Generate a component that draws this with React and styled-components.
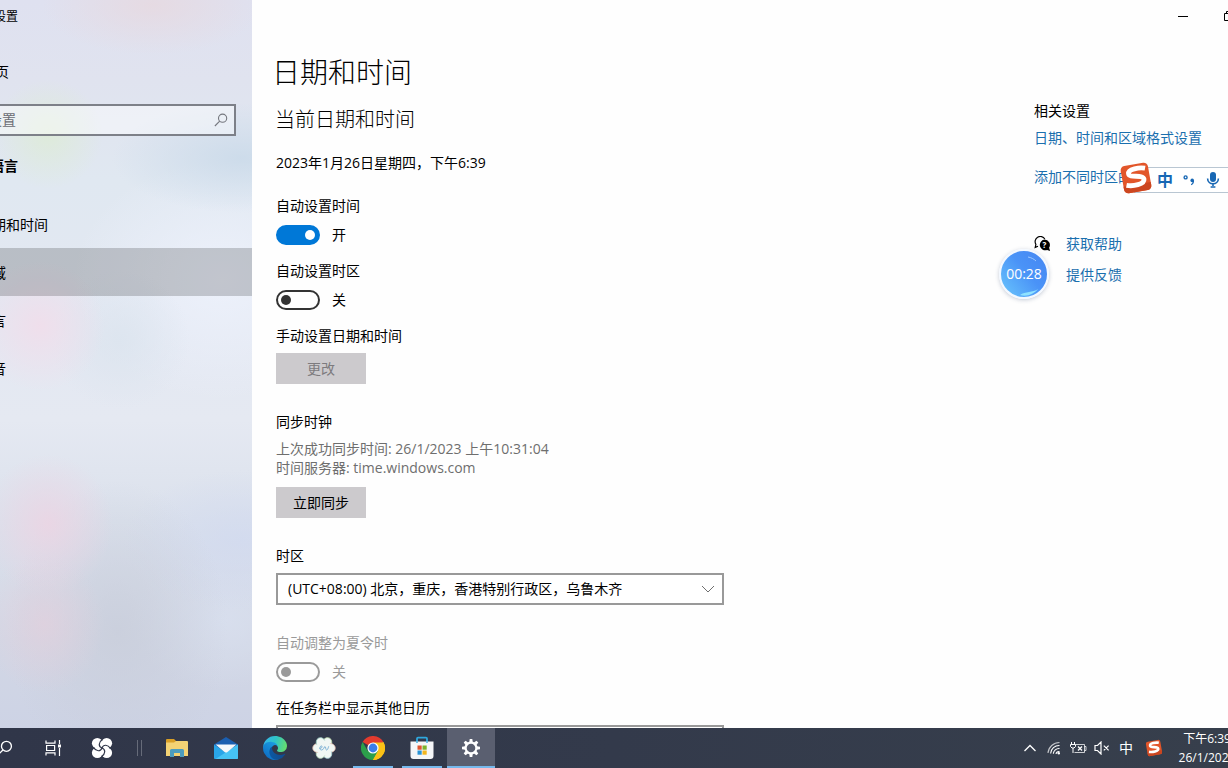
import React, { useState } from 'react';
import styled, { createGlobalStyle } from 'styled-components';

const accent = '#0078d7';
const linkColor = '#1a6fae';
const mutedText = '#6e6e6e';
const disabledText = '#9a9a9a';
const buttonGray = '#cccacd';

const GlobalStyle = createGlobalStyle`
  * {
    box-sizing: border-box;
  }
  body {
    margin: 0;
    overflow: hidden;
    color: #000;
    font-family: "Open Sans", "Noto Sans CJK SC", sans-serif;
    font-size: 14px;
    line-height: 20px;
  }
  button, input, select {
    font: inherit;
    color: inherit;
  }
`;

const Desktop = styled.div`
  position: relative;
  display: flex;
  flex-direction: column;
  height: 100vh;
  overflow: hidden;
`;

const SettingsWindow = styled.div`
  display: flex;
  flex: 1;
  min-height: 0;
  background: #fefefe;
`;

/* ---------- sidebar ---------- */

/* the window hangs over the left edge of the desktop */
const Sidebar = styled.aside`
  flex: none;
  width: 320px;
  margin-left: -68px;
  overflow: hidden;
  background:
    radial-gradient(ellipse 110px 50px at 220px 5px, rgba(232, 216, 222, 0.75), rgba(232, 216, 222, 0)),
    radial-gradient(ellipse 55px 55px at 116px 134px, rgba(221, 236, 212, 0.8), rgba(221, 236, 212, 0)),
    radial-gradient(ellipse 130px 55px at 310px 158px, rgba(204, 219, 234, 0.95), rgba(204, 219, 234, 0)),
    radial-gradient(ellipse 65px 65px at 108px 326px, rgba(240, 222, 235, 0.95), rgba(240, 222, 235, 0)),
    radial-gradient(ellipse 70px 70px at 188px 340px, rgba(219, 228, 238, 0.8), rgba(219, 228, 238, 0)),
    radial-gradient(ellipse 65px 70px at 116px 524px, rgba(236, 212, 227, 0.85), rgba(236, 212, 227, 0)),
    radial-gradient(ellipse 60px 70px at 112px 624px, rgba(226, 208, 221, 0.75), rgba(226, 208, 221, 0)),
    radial-gradient(ellipse 110px 150px at 186px 630px, rgba(200, 205, 218, 0.75), rgba(200, 205, 218, 0)),
    radial-gradient(ellipse 120px 70px at 310px 540px, rgba(208, 217, 240, 0.7), rgba(208, 217, 240, 0)),
    radial-gradient(ellipse 90px 70px at 290px 620px, rgba(216, 223, 238, 0.9), rgba(216, 223, 238, 0)),
    radial-gradient(ellipse 150px 120px at 290px 280px, rgba(238, 242, 252, 0.9), rgba(238, 242, 252, 0)),
    linear-gradient(#dfe1f0 0, #e0e3ef 80px, #e0e8f1 180px, #e3e8f2 330px, #e5e9f2 420px, #dbe1ec 520px, #d2d7e5 640px, #cdd3e5 728px);
`;

const AppName = styled.div`
  padding: 7px 0 0 62px;
  font-size: 12px;
`;

const HomeLink = styled.a`
  display: block;
  margin-top: 35px;
  padding-left: 49px;
  color: inherit;
  text-decoration: none;
`;

const SearchBox = styled.label`
  display: flex;
  align-items: center;
  height: 32px;
  margin: 22px 16px 0;
  padding: 0 6px 0 10px;
  border: 2px solid #7d8088;
  background: rgba(255, 255, 255, 0.45);

  input {
    flex: 1;
    min-width: 0;
    padding: 0;
    border: 0;
    outline: 0;
    background: none;
  }
  input::placeholder {
    color: #6b6d74;
    opacity: 1;
  }
`;

const SidebarHeading = styled.h2`
  margin: 20px 0 24px;
  padding-left: 16px;
  font-size: 14px;
  font-weight: 700;
`;

const NavItem = styled.a`
  display: flex;
  align-items: center;
  height: 48px;
  padding: 2px 0 0 46px;
  color: inherit;
  text-decoration: none;
  background: ${props => (props.$hovered ? 'rgba(0, 0, 0, 0.18)' : 'none')};
`;

/* ---------- main pane ---------- */

const Main = styled.main`
  display: flex;
  flex: 1;
  flex-direction: column;
  min-width: 0;
  overflow: hidden;
`;

const TitleBar = styled.div`
  display: flex;
  flex: none;
  justify-content: flex-end;
  height: 32px;
  margin-right: -24px;
`;

const CaptionButton = styled.button`
  display: grid;
  place-items: center;
  width: 46px;
  padding: 0;
  border: 0;
  background: none;
`;

const Columns = styled.div`
  display: flex;
  flex: 1;
  justify-content: space-between;
  min-height: 0;
`;

const Content = styled.div`
  flex: 0 1 472px;
  padding: 20px 0 0 24px;
`;

const PageTitle = styled.h1`
  margin: 0 0 14px -4px;
  font-size: 28px;
  font-weight: 300;
  line-height: 40px;
`;

const SectionTitle = styled.h2`
  margin: 0 0 0 -1px;
  font-size: 20px;
  font-weight: 300;
  line-height: 28px;
`;

const CurrentDate = styled.p`
  margin: 19px 0 23px;
`;

const FieldLabel = styled.label`
  display: block;
  margin-bottom: ${props => (props.$tight ? '7px' : '9px')};
  color: ${props => (props.$disabled ? disabledText : 'inherit')};
`;

const ToggleRow = styled.div`
  display: flex;
  align-items: center;
  gap: 12px;
  height: 20px;
  margin-bottom: 16px;
  color: ${props => (props.$disabled ? disabledText : 'inherit')};
`;

const Switch = styled.input`
  display: flex;
  align-items: center;
  width: 44px;
  height: 20px;
  margin: 0;
  padding: 0 3px;
  border: 2px solid #333;
  border-radius: 10px;
  appearance: none;

  &::before {
    width: 10px;
    height: 10px;
    border-radius: 50%;
    background: #333;
    content: "";
  }
  &:checked {
    justify-content: flex-end;
    border-color: ${accent};
    background: ${accent};
  }
  &:checked::before {
    background: #fff;
  }
  &:disabled {
    border-color: ${disabledText};
  }
  &:disabled::before {
    background: ${disabledText};
  }
`;

const PushButton = styled.button`
  display: block;
  width: 90px;
  height: 31px;
  margin-bottom: 28px;
  padding: 0;
  border: 0;
  background: ${buttonGray};

  &:disabled {
    color: #7d7b7e;
  }
`;

const SyncTitle = styled.h3`
  margin: 0 0 7px;
  font-size: 14px;
  font-weight: 400;
`;

const SyncInfo = styled.p`
  margin: 0 0 10px;
  color: ${mutedText};
  line-height: 19px;
`;

const SelectBox = styled.div`
  display: grid;
  align-items: center;
  margin-bottom: 28px;

  select, svg {
    grid-area: 1 / 1;
  }
  select {
    width: 100%;
    height: 32px;
    padding: 0 32px 0 10px;
    border: 2px solid #999;
    border-radius: 0;
    background: #fff;
    appearance: none;
  }
  svg {
    justify-self: end;
    margin-right: 9px;
    pointer-events: none;
  }
`;

const Related = styled.aside`
  flex: none;
  width: 194px;
  padding-top: 69px;
`;

const RelatedTitle = styled.h2`
  margin: 0 0 7px;
  font-size: 14px;
  font-weight: 400;
`;

const TextLink = styled.a`
  display: block;
  color: ${linkColor};
  white-space: nowrap;
  text-decoration: none;
`;

const RelatedLinks = styled.nav`
  display: grid;
  gap: 19px;
  margin-bottom: 47px;
`;

const HelpLinks = styled.nav`
  display: grid;
  grid-template-columns: 16px auto;
  gap: 11px 16px;
  align-items: center;

  a {
    grid-column: 2;
  }
`;

/* ---------- floating widgets ---------- */

const InputBar = styled.div`
  position: absolute;
  top: 167px;
  right: 0;
  display: flex;
  align-items: center;
  width: 94px;
  height: 26px;
  padding-left: 19px;
  border: solid #b9c6d2;
  border-width: 1px 0;
  background: #fff;
  color: #1767b4;
`;

const InputBadge = styled.button`
  position: absolute;
  top: -7px;
  left: -15px;
  padding: 0;
  border: 0;
  background: none;

  svg {
    display: block;
  }
`;

const InputKey = styled.button`
  display: grid;
  flex: none;
  place-items: center;
  width: 24px;
  height: 24px;
  padding: 0;
  border: 0;
  background: none;
  font-size: 16px;
  font-weight: 700;
`;

const Timer = styled.div`
  position: absolute;
  top: 249px;
  right: 179px;
  display: grid;
  place-items: center;
  width: 50px;
  height: 50px;
  border: 2px solid #f3f8ff;
  border-radius: 50%;
  background: linear-gradient(50deg, #64bdfb 10%, #4a93f7 55%, #4585f2);
  box-shadow: 0 1px 4px rgba(60, 80, 120, 0.3);
  color: #fff;

  svg, span {
    grid-area: 1 / 1;
  }
`;

/* ---------- taskbar ---------- */

const Taskbar = styled.footer`
  display: flex;
  flex: none;
  justify-content: space-between;
  height: 40px;
  overflow: hidden;
  background: linear-gradient(90deg, #303649, #333a4b 50%, #373f4c);
  color: #fff;
`;

const TaskButtons = styled.div`
  display: flex;
  gap: 1px;
  margin-left: -20px;
`;

const TaskButton = styled.button`
  display: grid;
  place-items: center;
  width: 48px;
  height: 40px;
  padding: 0;
  border: 0;
  background: ${props => (props.$active ? '#5a5f70' : 'none')};
  box-shadow: ${props => (props.$active ? 'inset 0 -2px #76b9ed' : 'none')};
`;

const RunningMark = styled(TaskButton)`
  width: 40px;
  margin: 0 4px;
  box-shadow: inset 0 -2px #76b9ed;
`;

const Divider = styled.div`
  width: 5px;
  height: 16px;
  margin: 12px 10px;
  border: solid #666b79;
  border-width: 0 1px;
`;

const Tray = styled.div`
  display: flex;
  align-items: center;
  margin-right: -14px;
`;

const TrayButton = styled.button`
  display: grid;
  place-items: center;
  width: ${props => (props.$wide ? '32px' : '24px')};
  height: 40px;
  padding: 0;
  border: 0;
  background: none;
  font-size: 14px;
`;

const Clock = styled.time`
  width: 70px;
  margin-left: 2px;
  font-size: 12px;
  line-height: 19px;
  text-align: center;
  white-space: nowrap;
`;

/* ---------- icons ---------- */

const Magnifier = ({ size = 14, color = '#75777e' }) => (
  <svg width={size} height={size} viewBox="0 0 14 14" fill="none" stroke={color} strokeWidth="1.1">
    <circle cx="8.6" cy="5.2" r="4.1" />
    <path d="M5.7 8.2L.9 13" />
  </svg>
);

const Chevron = () => (
  <svg width="14" height="10" viewBox="0 0 14 10" fill="none" stroke="#6f6f6f">
    <path d="M1 2l6 6 6-6" />
  </svg>
);

const HelpIcon = () => (
  <svg width="18" height="16" viewBox="0 0 18 16">
    <path d="M4 10.2L1.2 11.4l.7-3A5.2 5.2 0 1 1 10.8 3" fill="none" stroke="#000" strokeWidth="1.2" />
    <path d="M10.4 3.6a5.4 5.4 0 0 1 4.7 8.2l1 3.2-3-1a5.4 5.4 0 1 1-2.7-10.4z" />
    <text x="10.4" y="12" fill="#fff" fontSize="8" fontWeight="700" textAnchor="middle">?</text>
  </svg>
);

const SogouIcon = ({ size }) => (
  <svg width={size} height={size} viewBox="0 0 32 32">
    <g transform="rotate(-10 16 16)">
      <rect x="3" y="3" width="26" height="26" rx="4" fill="#e2562a" />
      <path d="M3 22h26v3a4 4 0 0 1-4 4H7a4 4 0 0 1-4-4z" fill="#cc4620" />
      <path
        d="M26 8.4c-5-1.8-16-2.2-16.2 2.4-.2 4.6 13.6 2.6 13.4 7.6-.2 5-11.4 5-17.2 2.8"
        fill="none"
        stroke="#fff"
        strokeWidth="4.6"
      />
    </g>
  </svg>
);

const PunctuationIcon = () => (
  <svg width="12" height="12" viewBox="0 0 12 12" fill="none" stroke="#1767b4">
    <circle cx="2.6" cy="3.4" r="1.5" strokeWidth="1.4" />
    <circle cx="9.2" cy="6.4" r="1.8" fill="#1767b4" stroke="none" />
    <path d="M10.4 6.4c.2 2-.6 3.4-2.2 4.4" strokeWidth="1.3" />
  </svg>
);

const MicIcon = () => (
  <svg width="14" height="16" viewBox="0 0 14 16" fill="none" stroke="#1767b4" strokeWidth="1.6">
    <rect x="4" y="0" width="6" height="10" rx="3" fill="#1767b4" stroke="none" />
    <path d="M1.6 6.5c0 7 10.8 7 10.8 0M7 11.6V14M4.6 15h4.8" />
  </svg>
);

const TaskViewIcon = () => (
  <svg width="17" height="16" viewBox="0 0 17 16" fill="none" stroke="#fff" strokeWidth="1.2">
    <path d="M1 .5v2.700h9V.5M1 15.500v-2.700h9v2.700M1.600 5.500h8v5h-8zM14.500 0v4M14.500 8v8" />
    <rect x="13" y="4.5" width="3" height="3" fill="#fff" stroke="none" />
  </svg>
);

const PinwheelIcon = () => (
  <svg width="22" height="22" viewBox="0 0 22 22">
    <g fill="#fff">
      <circle cx="6.3" cy="6.3" r="5.4" />
      <circle cx="15.7" cy="6.3" r="5.4" />
      <circle cx="6.3" cy="15.7" r="5.4" />
      <circle cx="15.7" cy="15.7" r="5.4" />
      <circle cx="11" cy="11" r="6" />
    </g>
    {[0, 90, 180, 270].map(angle => (
      <path
        key={angle}
        transform={`rotate(${angle} 11 11)`}
        d="M11 11C7.200 9.600 7.400 5.200 11.400 2.600"
        fill="none"
        stroke="#303649"
        strokeWidth="1.2"
      />
    ))}
  </svg>
);

const FolderIcon = () => (
  <svg width="24" height="20" viewBox="0 0 24 20">
    <path d="M1 2a1 1 0 0 1 1-1h7l2 2h11v4H1z" fill="#d99f26" />
    <path d="M1 4.500h8L11 3h11a1 1 0 0 1 1 1v14H1z" fill="#f3d274" />
    <path d="M5 19v-6.500A1.500 1.500 0 0 1 6.500 11h11a1.500 1.500 0 0 1 1.500 1.500V19h-4v-4H9v4z" fill="#4c9cbd" />
  </svg>
);

const MailIcon = () => (
  <svg width="26" height="24" viewBox="0 0 26 24">
    <path d="M1 8.500L13 1l12 7.500v4H1z" fill="#1b5fb0" />
    <path d="M1 8.500l12 8 12-8V22a1 1 0 0 1-1 1H2a1 1 0 0 1-1-1z" fill="#29a5e8" />
    <path d="M25 8.500V22a1 1 0 0 1-1 1H2.500z" fill="#46c3f4" />
    <path d="M2.500 8.500h21L14.500 16a2.500 2.500 0 0 1-3 0z" fill="#f4f8fb" />
  </svg>
);

const EdgeIcon = () => (
  <svg width="24" height="24" viewBox="0 0 256 256">
    <defs>
      <linearGradient id="edgeDeep" x1="0" x2="1">
        <stop offset="0" stopColor="#0c59a4" />
        <stop offset="1" stopColor="#114a8b" />
      </linearGradient>
      <linearGradient id="edgeBlue" x1="0.8" y1="0.1" x2="0.3" y2="1">
        <stop offset="0" stopColor="#1b9de2" />
        <stop offset="1" stopColor="#0d6bc2" />
      </linearGradient>
      <linearGradient id="edgeGreen" x1="0" y1="0.3" x2="1" y2="0.5">
        <stop offset="0" stopColor="#35b4ec" />
        <stop offset="0.5" stopColor="#2fc4c6" />
        <stop offset="1" stopColor="#66dd6e" />
      </linearGradient>
    </defs>
    <path fill="url(#edgeDeep)" d="M231 190.500a94 94 0 0 1-10.500 4.700 102 102 0 0 1-35.900 6.500c-47.300 0-88.500-32.500-88.500-74.300a31.500 31.500 0 0 1 16.400-27.200c-42.800 1.800-53.800 46.400-53.800 72.500 0 73.900 68.100 81.400 82.800 81.400 7.900 0 19.800-2.300 27-4.600l1.300-.4a128 128 0 0 0 66.600-52.800 4 4 0 0 0-5.400-5.800z" />
    <path fill="url(#edgeBlue)" d="M105.700 241.400a79 79 0 0 1-22.700-21.300 80.700 80.700 0 0 1 29.500-120c3.100-1.500 8.500-4.100 15.600-4a32.400 32.400 0 0 1 25.700 13 31.900 31.900 0 0 1 6.300 18.700c0-.2 24.500-79.600-80-79.600-43.900 0-80 41.600-80 78.200a130 130 0 0 0 12.100 56 128 128 0 0 0 156.400 67.100 75.500 75.500 0 0 1-62.900-8.100z" />
    <path fill="url(#edgeGreen)" d="M152.300 148.900c-.8 1-3.300 2.500-3.300 5.600 0 2.600 1.700 5.100 4.700 7.200 14.400 10 41.500 8.700 41.600 8.700a59.500 59.500 0 0 0 30.300-8.300 61.400 61.400 0 0 0 30.400-52.900c.3-22.400-8-37.300-11.300-43.900C223.500 23.800 177.700 0 128 0A128 128 0 0 0 0 126.200c.5-36.500 36.800-66 80-66 3.500 0 23.500.3 42 10 16.300 8.600 24.900 19 30.900 29.200 6.100 10.700 7.200 24.200 7.200 29.600s-2.700 13.300-7.800 19.900z" />
  </svg>
);

const FlowerIcon = () => (
  <svg width="24" height="24" viewBox="0 0 24 24">
    {[0, 60, 120, 180, 240, 300].map((angle, i) => (
      <ellipse
        key={angle}
        cx="12"
        cy="5.4"
        rx="4.4"
        ry="4.7"
        transform={`rotate(${angle + 30} 12 12)`}
        fill="#f1f7f4"
        stroke={['#bfdfae', '#e4b8a8', '#a8d3d8', '#b9dcb8', '#e2b3a2', '#9ccfc4'][i]}
        strokeWidth="0.7"
      />
    ))}
    <circle cx="12" cy="12" r="7.6" fill="#f1f7f4" />
    <path d="M7.500 12.500c2.500 0 3.500-2.500 1.800-2.500s-2.200 4 .2 4 2.500-3.500 3.500-3.500.4 3.500 1.500 3.500 1.600-1.700 2.200-3.700" fill="none" stroke="#7eb2d6" />
  </svg>
);

const ChromeIcon = () => (
  <svg width="24" height="24" viewBox="0 0 24 24">
    <path d="M12 12L1.600 6A12 12 0 0 1 22.400 6z" fill="#e33b2e" />
    <path d="M12 12l10.400-6A12 12 0 0 1 12 24z" fill="#fbc116" />
    <path d="M17.200 15L12 24A12 12 0 0 1 1.600 6l5.200 9z" fill="#2c9f4b" />
    <path d="M12 6.500h10.600A12 12 0 0 1 12 24l5-9z" fill="#fbc116" />
    <circle cx="12" cy="12" r="5.6" fill="#fff" />
    <circle cx="12" cy="12" r="4.4" fill="#3b7de9" />
  </svg>
);

const StoreIcon = () => (
  <svg width="24" height="24" viewBox="0 0 24 24">
    <path d="M7 6.500V2.700a1 1 0 0 1 1-1h8a1 1 0 0 1 1 1v3.800" fill="none" stroke="#2fa8de" strokeWidth="1.8" />
    <path d="M.5 5.500h23V20a3 3 0 0 1-3 3h-17a3 3 0 0 1-3-3z" fill="#f5f6f8" />
    <path d="M7 5.500v1.300M17 5.500v1.300" stroke="#2fa8de" strokeWidth="1.8" />
    <path d="M7.500 9.500h4.200v4.200H7.500z" fill="#e0542f" />
    <path d="M12.500 9.500h4.200v4.200h-4.200z" fill="#7cb32c" />
    <path d="M7.500 14.500h4.200v4.200H7.500z" fill="#2a94d6" />
    <path d="M12.500 14.500h4.200v4.200h-4.200z" fill="#f2b51d" />
  </svg>
);

const GearIcon = () => (
  <svg width="20" height="20" viewBox="0 0 20 20">
    <circle cx="10" cy="10" r="5.4" fill="none" stroke="#fff" strokeWidth="2.2" />
    {[0, 45, 90, 135, 180, 225, 270, 315].map(angle => (
      <path key={angle} transform={`rotate(${angle} 10 10)`} d="M8.200 4.500L8.700 1h2.600l.5 3.500z" fill="#fff" />
    ))}
  </svg>
);

const WifiIcon = () => (
  <svg width="14" height="14" viewBox="0 0 14 14" fill="none" stroke="#fff" strokeWidth="1.1">
    <path d="M1 12A11.500 11.500 0 0 1 12.500 1.500" opacity="0.7" />
    <path d="M3.600 12.500a8.600 8.600 0 0 1 8.900-8" />
    <path d="M6.300 12.800a5.700 5.700 0 0 1 6.200-5.300" />
    <path d="M9 13a3 3 0 0 1 3.500-2.500" />
    <circle cx="11.8" cy="12.3" r="1.2" fill="#fff" stroke="none" />
  </svg>
);

const BatteryIcon = () => (
  <svg width="17" height="14" viewBox="0 0 17 14" fill="none" stroke="#fff">
    <path d="M5.500 3.500h9v8H4.500M14.500 5.500h1.500v4h-1.500" opacity="0.75" />
    <path d="M8 5.500l4 4M12 5.500l-4 4" strokeWidth="1.3" />
    <path d="M1.500 1v2.500M4.500 1v2.500M.5 3.500h5v2L4 7H2L.5 5.500zM3 7v5" />
  </svg>
);

const MuteIcon = () => (
  <svg width="16" height="14" viewBox="0 0 16 14" fill="none" stroke="#fff" strokeWidth="1.2">
    <path d="M1 4.500h2.500L7 1v12L3.500 9.500H1zM9.800 4.600l4.800 4.800M14.600 4.600L9.800 9.400" />
  </svg>
);

/* ---------- page ---------- */

const ToggleField = ({ id, label, defaultOn = false, disabled = false }) => {
  const [on, setOn] = useState(defaultOn);
  return (
    <>
      <FieldLabel htmlFor={id} $disabled={disabled}>{label}</FieldLabel>
      <ToggleRow $disabled={disabled}>
        <Switch
          id={id}
          type="checkbox"
          role="switch"
          checked={on}
          disabled={disabled}
          onChange={e => setOn(e.target.checked)}
        />
        <span>{on ? '开' : '关'}</span>
      </ToggleRow>
    </>
  );
};

const SelectField = ({ id, label, options }) => (
  <>
    <FieldLabel htmlFor={id} $tight>{label}</FieldLabel>
    <SelectBox>
      <select id={id}>
        {options.map(option => <option key={option}>{option}</option>)}
      </select>
      <Chevron />
    </SelectBox>
  </>
);

const navItems = ['日期和时间', '区域', '语言', '语音'];

const App = () => (
  <Desktop lang="zh-CN">
    <GlobalStyle />
    <SettingsWindow>
      <Sidebar>
        <AppName>设置</AppName>
        <HomeLink href="#home">主页</HomeLink>
        <SearchBox>
          <input type="text" placeholder="查找设置" aria-label="查找设置" />
          <Magnifier />
        </SearchBox>
        <SidebarHeading>时间和语言</SidebarHeading>
        <nav>
          {navItems.map(item => (
            <NavItem key={item} href="#nav" $hovered={item === '区域'}>{item}</NavItem>
          ))}
        </nav>
      </Sidebar>

      <Main>
        <TitleBar>
          <CaptionButton aria-label="最小化">
            <svg width="10" height="10" stroke="#000"><path d="M0 5.500h10" /></svg>
          </CaptionButton>
          <CaptionButton aria-label="还原">
            <svg width="10" height="10" fill="none" stroke="#000"><path d="M.5 2.500h7v7h-7zM2.500 2.500v-2h7v7h-2" /></svg>
          </CaptionButton>
        </TitleBar>
        <Columns>
          <Content>
            <PageTitle>日期和时间</PageTitle>
            <SectionTitle>当前日期和时间</SectionTitle>
            <CurrentDate>2023年1月26日星期四，下午6:39</CurrentDate>
            <ToggleField id="auto-time" label="自动设置时间" defaultOn />
            <ToggleField id="auto-zone" label="自动设置时区" />
            <FieldLabel htmlFor="change" $tight>手动设置日期和时间</FieldLabel>
            <PushButton id="change" disabled>更改</PushButton>
            <SyncTitle>同步时钟</SyncTitle>
            <SyncInfo>
              上次成功同步时间: 26/1/2023 上午10:31:04<br />
              时间服务器: time.windows.com
            </SyncInfo>
            <PushButton>立即同步</PushButton>
            <SelectField
              id="zone"
              label="时区"
              options={['(UTC+08:00) 北京，重庆，香港特别行政区，乌鲁木齐']}
            />
            <ToggleField id="dst" label="自动调整为夏令时" disabled />
            <SelectField id="calendar" label="在任务栏中显示其他日历" options={['不显示其他日历']} />
          </Content>
          <Related>
            <RelatedTitle>相关设置</RelatedTitle>
            <RelatedLinks>
              <TextLink href="#format">日期、时间和区域格式设置</TextLink>
              <TextLink href="#clocks">添加不同时区的时钟</TextLink>
            </RelatedLinks>
            <HelpLinks>
              <HelpIcon />
              <TextLink href="#help">获取帮助</TextLink>
              <TextLink href="#feedback">提供反馈</TextLink>
            </HelpLinks>
          </Related>
        </Columns>
      </Main>
    </SettingsWindow>

    <InputBar>
      <InputBadge aria-label="输入法"><SogouIcon size={34} /></InputBadge>
      <InputKey>中</InputKey>
      <InputKey aria-label="标点"><PunctuationIcon /></InputKey>
      <InputKey aria-label="语音输入"><MicIcon /></InputKey>
    </InputBar>

    <Timer>
      <svg width="46" height="46" viewBox="0 0 46 46" fill="none">
        <path d="M19 44c5-4 13-2 18-6-4 5-11 8-18 6z" fill="#8fe2ff" />
        <path d="M27 6c3 .5 6 2 8 4" stroke="#9cc8ff" />
      </svg>
      <span>00:28</span>
    </Timer>

    <Taskbar>
      <TaskButtons>
        <TaskButton aria-label="搜索"><Magnifier size={17} color="#fff" /></TaskButton>
        <TaskButton aria-label="任务视图"><TaskViewIcon /></TaskButton>
        <TaskButton aria-label="小组件"><PinwheelIcon /></TaskButton>
        <Divider />
        <TaskButton aria-label="文件资源管理器"><FolderIcon /></TaskButton>
        <TaskButton aria-label="邮件"><MailIcon /></TaskButton>
        <TaskButton aria-label="浏览器"><EdgeIcon /></TaskButton>
        <TaskButton aria-label="录屏"><FlowerIcon /></TaskButton>
        <RunningMark aria-label="Chrome"><ChromeIcon /></RunningMark>
        <RunningMark aria-label="应用商店"><StoreIcon /></RunningMark>
        <TaskButton aria-label="设置" $active><GearIcon /></TaskButton>
      </TaskButtons>
      <Tray>
        <TrayButton aria-label="显示隐藏的图标">
          <svg width="12" height="8" fill="none" stroke="#fff" strokeWidth="1.3"><path d="M.5 7L6 1.500 11.500 7" /></svg>
        </TrayButton>
        <TrayButton aria-label="网络"><WifiIcon /></TrayButton>
        <TrayButton aria-label="电池"><BatteryIcon /></TrayButton>
        <TrayButton aria-label="音量"><MuteIcon /></TrayButton>
        <TrayButton>中</TrayButton>
        <TrayButton aria-label="搜狗输入法" $wide><SogouIcon size={18} /></TrayButton>
        <Clock>下午6:39<br />26/1/2023</Clock>
      </Tray>
    </Taskbar>
  </Desktop>
);

export default App;
